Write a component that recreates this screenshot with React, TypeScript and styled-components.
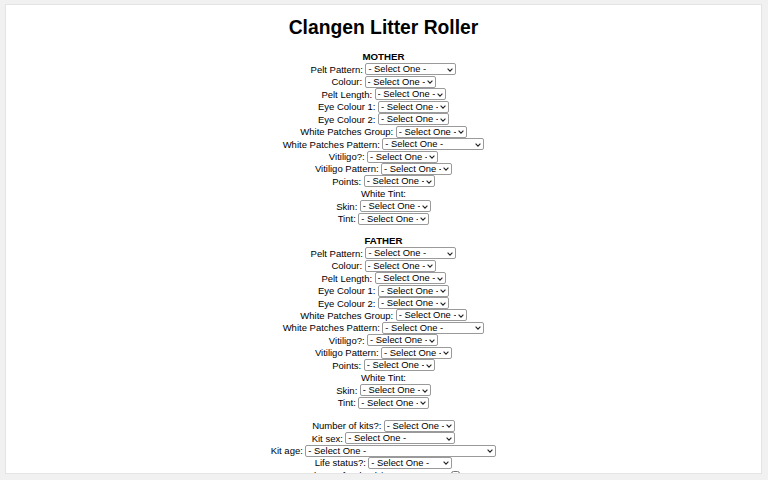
import React from "react";
import styled, { createGlobalStyle } from "styled-components";

const Global = createGlobalStyle`
  html, body { margin: 0; padding: 0; background: #f1f1f1; }
  body { font-family: "Liberation Sans", Arial, sans-serif; color: #000; }
`;

const Page = styled.div`
  height: 480px;
  padding: 4px 6px 6px 5px;
  box-sizing: border-box;
  display: flex;
`;

const Card = styled.main`
  flex: 1;
  background: #fff;
  border: 1px solid #e4e4e4;
  overflow: hidden;
  padding-top: 12px;
  display: flex;
  flex-direction: column;
  align-items: center;
`;

const Title = styled.h1`
  margin: 0 0 11.8px;
  font-size: 19.3px;
  line-height: 22px;
  font-weight: bold;
  text-align: center;
`;

const Section = styled.section`
  display: flex;
  flex-direction: column;
  align-items: center;
`;

const Heading = styled.div`
  height: 12.45px;
  line-height: 12.45px;
  font-size: 9.7px;
  font-weight: bold;
`;

const Row = styled.div`
  height: 12.45px;
  display: flex;
  align-items: center;
  justify-content: center;
  gap: 2.5px;
  font-size: 9.5px;
  white-space: nowrap;
`;

const Spacer = styled.div<{ $h: number }>`
  height: ${(p) => p.$h}px;
  flex-shrink: 0;
`;

const SelectBox = styled.span`
  position: relative;
  display: inline-flex;
`;

const Select = styled.select<{ $w: number }>`
  appearance: none;
  -webkit-appearance: none;
  width: ${(p) => p.$w}px;
  height: 12px;
  box-sizing: border-box;
  padding: 0 10px 0 2px;
  margin: 0;
  font-family: "Liberation Sans", Arial, sans-serif;
  font-size: 9.4px;
  line-height: 10px;
  color: #000;
  background: #fff;
  border: 1px solid #9a9a9a;
  border-radius: 2px;
`;

const Chevron = styled.svg`
  position: absolute;
  right: 3px;
  top: 4.5px;
  width: 6px;
  height: 4px;
  pointer-events: none;
`;

const Check = styled.input`
  width: 9px;
  height: 9px;
  margin: 0;
`;

type F = [string, number];

const parentFields: F[] = [
  ["Pelt Pattern:", 91],
  ["Colour:", 71],
  ["Pelt Length:", 71],
  ["Eye Colour 1:", 71],
  ["Eye Colour 2:", 71],
  ["White Patches Group:", 71],
  ["White Patches Pattern:", 102],
  ["Vitiligo?:", 71],
  ["Vitiligo Pattern:", 71],
  ["Points:", 71],
];

const tintFields: F[] = [
  ["Skin:", 71],
  ["Tint:", 71],
];

const kitFields: F[] = [
  ["Number of kits?:", 71],
  ["Kit sex:", 110],
  ["Kit age:", 191],
  ["Life status?:", 84],
];

const Field = ({ label, w }: { label: string; w: number }) => (
  <Row>
    <span>{label}</span>
    <SelectBox>
      <Select $w={w} defaultValue="">
        <option value="">- Select One -</option>
      </Select>
      <Chevron viewBox="0 0 6 4">
        <path d="M0.6 0.6 L3 3.1 L5.4 0.6" fill="none" stroke="#222" strokeWidth="1.1" />
      </Chevron>
    </SelectBox>
  </Row>
);

const Parent = ({ name }: { name: string }) => (
  <Section>
    <Heading>{name}</Heading>
    {parentFields.map(([l, w]) => (
      <Field key={l} label={l} w={w} />
    ))}
    <Row>White Tint:</Row>
    {tintFields.map(([l, w]) => (
      <Field key={l} label={l} w={w} />
    ))}
  </Section>
);

export default function App() {
  return (
    <>
      <Global />
      <Page>
        <Card>
          <Title>Clangen Litter Roller</Title>
          <Parent name="MOTHER" />
          <Spacer $h={9.7} />
          <Parent name="FATHER" />
          <Spacer $h={10.7} />
          <Section>
            {kitFields.map(([l, w]) => (
              <Field key={l} label={l} w={w} />
            ))}
            <Row>
              <span>Chance for death/separate ages?</span>
              <Check type="checkbox" />
            </Row>
          </Section>
        </Card>
      </Page>
    </>
  );
}
